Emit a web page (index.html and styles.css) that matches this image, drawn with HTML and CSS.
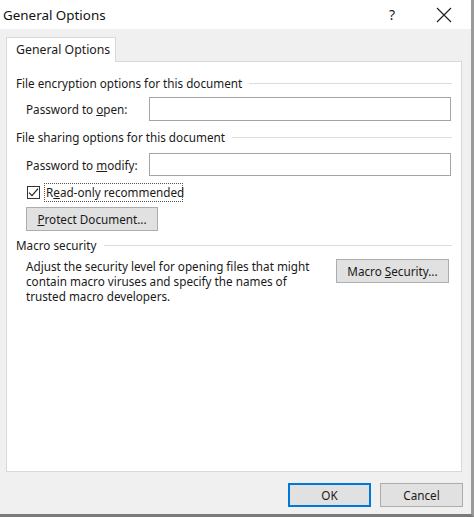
FILE: index.html
```html
<!DOCTYPE html>
<html>
<head>
<meta charset="utf-8">
<link rel="stylesheet" href="styles.css">
</head>
<body>
<div class="window">
  <div class="titlebar">
    <span class="title">General Options</span>
    <span class="help">?</span>
    <span class="close">
      <svg width="16" height="16" viewBox="0 0 16 16"><path d="M1 1 L15 15 M15 1 L1 15" stroke="#222" stroke-width="1.2" fill="none"/></svg>
    </span>
  </div>
  <div class="body">
    <div class="tabs">
      <div class="tab">General Options</div>
    </div>
    <div class="panel">
      <div class="group"><span>File encryption options for this document</span><div class="rule"></div></div>
      <div class="field f1">
        <label>Password to <u>o</u>pen:</label>
        <div class="input"></div>
      </div>
      <div class="group g2"><span>File sharing options for this document</span><div class="rule"></div></div>
      <div class="field f2">
        <label>Password to <u>m</u>odify:</label>
        <div class="input"></div>
      </div>
      <div class="check-row">
        <span class="checkbox">
          <svg width="11" height="11" viewBox="0 0 11 11"><path d="M1 5.6 L4 8.6 L10 1.6" stroke="#222" stroke-width="1.2" fill="none"/></svg>
        </span>
        <span class="check-label">R<u>e</u>ad-only recommended</span>
      </div>
      <div class="btn protect"><u>P</u>rotect Document...</div>
      <div class="group g3"><span>Macro security</span><div class="rule"></div></div>
      <div class="macro">
        <p>Adjust the security level for opening files that might contain macro viruses and specify the names of trusted macro developers.</p>
        <div class="btn macro-btn">Macro <u>S</u>ecurity...</div>
      </div>
    </div>
    <div class="footer">
      <div class="btn ok">OK</div>
      <div class="btn cancel">Cancel</div>
    </div>
  </div>
</div>
</body>
</html>
```

FILE: styles.css
```css
html, body {
  margin: 0;
  padding: 0;
}
body {
  width: 474px;
  height: 517px;
  overflow: hidden;
  background: #f0f0f0;
  font-family: "Noto Sans", "Open Sans", sans-serif;
  font-size: 11.7px;
  color: #1a1a1a;
}
.window {
  width: 471px;
  height: 514px;
  border-right: 3px solid #9a9a9a;
  border-bottom: 3px solid #7a7a7a;
  background: #f0f0f0;
  display: flex;
  flex-direction: column;
}
.titlebar {
  height: 29px;
  background: #ffffff;
  display: flex;
  align-items: center;
  flex-shrink: 0;
}
.title {
  font-size: 13.4px;
  margin-left: 3px;
  color: #111;
  flex: 1;
}
.help {
  font-size: 14px;
  width: 20px;
  text-align: center;
  margin-right: 34px;
  color: #222;
}
.close {
  width: 16px;
  height: 16px;
  margin-right: 19px;
  display: flex;
}
.body {
  padding: 8px 9px 0 6px;
  display: flex;
  flex-direction: column;
}
.tabs {
  display: flex;
  height: 24px;
  position: relative;
  z-index: 1;
}
.tab {
  width: 110px;
  background: #fff;
  border: 1px solid #d9d9d9;
  border-bottom: none;
  box-sizing: border-box;
  padding-left: 9px;
  line-height: 23px;
  height: 25px;
  font-size: 12.3px;
}
.panel {
  height: 411px;
  box-sizing: border-box;
  background: #fff;
  border: 1px solid #d9d9d9;
  padding: 13px 10px 0 9px;
  display: flex;
  flex-direction: column;
}
.group {
  display: flex;
  align-items: center;
  height: 16px;
  line-height: 16px;
}
.group span {
  white-space: nowrap;
}
.rule {
  flex: 1;
  height: 1px;
  background: #dcdcdc;
  margin-left: 7px;
  margin-right: -1px;
}
.g2 {
  margin-top: 8px;
}
.field {
  display: flex;
  align-items: center;
  margin-left: 10px;
  margin-top: 6px;
}
.f2 {
  margin-top: 8px;
}
.field label {
  width: 123px;
  flex-shrink: 0;
}
.input {
  flex: 1;
  height: 24px;
  box-sizing: border-box;
  border: 1px solid #a4a4a4;
  background: #fff;
}
.f2 .input {
  height: 23px;
}
.check-row {
  display: flex;
  align-items: center;
  margin-left: 11px;
  margin-top: 7px;
  height: 19px;
}
.checkbox {
  width: 13px;
  height: 13px;
  box-sizing: border-box;
  border: 1px solid #333;
  display: flex;
  align-items: center;
  justify-content: center;
  background: #fff;
}
.check-label {
  margin-left: 4px;
  border: 1px dotted #555;
  height: 19px;
  box-sizing: border-box;
  line-height: 17px;
  padding: 0 1px 0 1px;
  width: 139px;
  white-space: nowrap;
}
.btn {
  background: #e1e1e1;
  border: 1px solid #adadad;
  box-sizing: border-box;
  height: 24px;
  line-height: 22px;
  text-align: center;
  white-space: nowrap;
}
.protect {
  margin-left: 10px;
  margin-top: 5px;
  width: 132px;
}
.g3 {
  margin-top: 6px;
}
.macro {
  display: flex;
  margin-left: 10px;
  margin-top: 6px;
}
.macro p {
  margin: 0;
  width: 292px;
  line-height: 15px;
}
.macro-btn {
  margin-left: auto;
  margin-right: 2px;
  width: 113px;
}
.footer {
  display: flex;
  justify-content: flex-end;
  margin-top: 11px;
  gap: 9px;
  margin-right: -1px;
}
.ok, .cancel {
  width: 83px;
}
.ok {
  border: 2px solid #0078d7;
  line-height: 20px;
}
```
